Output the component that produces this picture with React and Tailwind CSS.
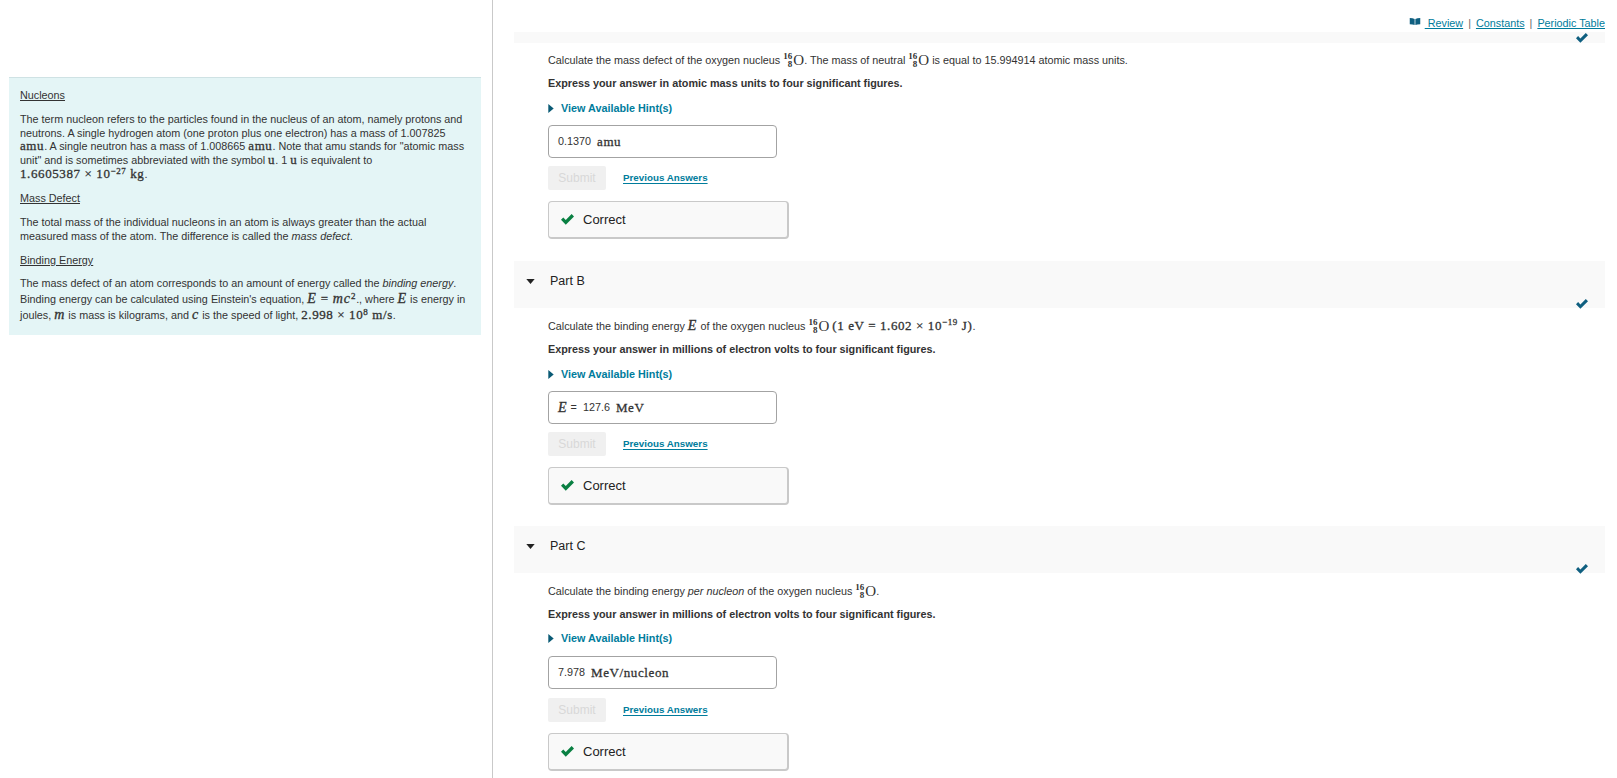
import React from "react";

const serif = "font-['Liberation_Serif','DejaVu_Serif',serif]";

function M({ children, className = "" }) {
  return <span className={`${serif} text-[13px] leading-[0] text-[#333] [-webkit-text-stroke:0.3px_#333] tracking-[0.6px] ${className}`}>{children}</span>;
}

function V({ children }) {
  return <span className={`${serif} italic text-[14px] leading-[0] text-[#333] [-webkit-text-stroke:0.35px_#333] tracking-[1px]`}>{children}</span>;
}

function Oxygen() {
  return (
    <span className={`${serif} inline-flex items-center align-middle text-[#333] relative -top-[1px]`}>
      <span className="inline-flex flex-col items-end text-[9px] font-bold leading-[8px] mr-[1px]">
        <span>16</span>
        <span>8</span>
      </span>
      <span className="text-[15px] leading-none">O</span>
    </span>
  );
}

function Check({ className = "" }) {
  return (
    <svg viewBox="0 0 12 10" className={className} fill="currentColor">
      <path d="M0 5.2 L2.1 3.1 L4.4 5.4 L9.8 0 L12 2.2 L4.4 9.8 Z" />
    </svg>
  );
}

function Caret() {
  return (
    <svg viewBox="0 0 10 6" className="w-[9px] h-[5px] text-[#222]" fill="currentColor">
      <path d="M0 0 H10 L5 6 Z" />
    </svg>
  );
}

function Hint() {
  return (
    <div className="flex items-center gap-[7px] h-[16px] text-[10.8px] leading-[16px] font-bold text-[#007c9c]">
      <svg viewBox="0 0 6 10" className="w-[6px] h-[9px] text-[#0a5a75]" fill="currentColor">
        <path d="M0 0 L6 5 L0 10 Z" />
      </svg>
      <span>View Available Hint(s)</span>
    </div>
  );
}

function Answer({ children, gapBefore, gapSubmit = "mt-[8px]" }) {
  return (
    <div>
      <div className={`w-[229px] h-[33px] ${gapBefore} flex items-center border border-[#a3a3a3] rounded-[4px] px-[9px] text-[10.8px] text-[#333] bg-white`}>
        {children}
      </div>
      <div className={`${gapSubmit} flex items-center gap-[17px]`}>
        <div className="w-[58px] h-[24px] bg-[#f0f0f0] rounded-[2px] flex items-center justify-center text-[12px] text-[#d8d8d8]">Submit</div>
        <span className="text-[9.8px] font-bold text-[#007c9c] underline underline-offset-2">Previous Answers</span>
      </div>
      <div className="mt-[11px] w-[241px] h-[38px] flex items-center border border-[#c9c9c9] border-r-2 border-b-2 rounded-[4px] bg-[#f9f9f9] pl-[12px] text-[13px] text-[#222]">
        <Check className="w-[13px] h-[11px] text-[#0a8043] mr-[9px]" />
        Correct
      </div>
    </div>
  );
}

function PartBar({ name }) {
  return (
    <div className="relative h-[47px] bg-[#f9f9f9] flex items-center pb-[6px] pl-[12px] text-[12.5px] text-[#222]">
      <Caret />
      <span className="ml-[15px]">{name}</span>
      <Check className="absolute right-[17px] -bottom-[1px] w-[12px] h-[10px] text-[#0f5f80]" />
    </div>
  );
}

function Question({ children, bold, top, boldTop = "mt-[5px]", hintTop }) {
  return (
    <div className="pl-[34px]">
      <div className={`h-[18px] flex items-center ${top}`}>
        <p className="text-[10.8px] leading-[18px] text-[#333] whitespace-nowrap">{children}</p>
      </div>
      <p className={`${boldTop} h-[18px] text-[10.8px] leading-[18px] font-bold text-[#333]`}>{bold}</p>
      <div className={hintTop}><Hint /></div>
    </div>
  );
}

function Heading({ children }) {
  return <p className="text-[10.8px] leading-[14px] text-[#333] underline underline-offset-1">{children}</p>;
}

export default function App() {
  return (
    <div className="flex h-[778px] overflow-hidden bg-white font-['Liberation_Sans',Arial,sans-serif]">
      <aside className="w-[493px] shrink-0 border-r border-[#c9c9c9] pt-[77px] pl-[9px] pr-[11px]">
        <div className="h-[258px] border-t border-[#cfe2e4] bg-[#e4f5f6] px-[11px] pt-[10px] text-[10.8px] leading-[13.5px] text-[#333]">
          <Heading>Nucleons</Heading>
          <p className="mt-[11px]">
            The term nucleon refers to the particles found in the nucleus of an atom, namely protons and neutrons. A single hydrogen atom (one proton plus one electron) has a mass of 1.007825{" "}
            <M>amu</M>. A single neutron has a mass of 1.008665 <M>amu</M>. Note that amu stands for "atomic mass unit" and is sometimes abbreviated with the symbol <M>u</M>. 1 <M>u</M> is equivalent to
          </p>
          <p className="leading-[14px]">
            <M>1.6605387 × 10<sup className="text-[9px]">−27</sup> kg</M>.
          </p>
          <div className="mt-[10px]"><Heading>Mass Defect</Heading></div>
          <p className="mt-[11px]">
            The total mass of the individual nucleons in an atom is always greater than the actual measured mass of the atom. The difference is called the <i>mass defect</i>.
          </p>
          <div className="mt-[10px]"><Heading>Binding Energy</Heading></div>
          <p className="mt-[8px] leading-[16px]">
            The mass defect of an atom corresponds to an amount of energy called the <i>binding energy</i>. Binding energy can be calculated using Einstein's equation, <V>E</V> <M className="mx-[1px]">=</M> <V>mc</V><M><sup className="text-[9px]">2</sup></M>., where <V>E</V> is energy in joules, <V>m</V> is mass is kilograms, and <V>c</V> is the speed of light, <M>2.998 × 10<sup className="text-[9px]">8</sup> m/s</M>.
          </p>
        </div>
      </aside>

      <main className="flex-1 min-w-0 pl-[21px] pr-[12px]">
        <div className="h-[32px] pt-[15px] flex justify-end items-start gap-[4px] text-[10.8px] leading-[16px] text-[#666]">
          <svg viewBox="0 0 12 8" className="w-[12px] h-[7px] mt-[3px] text-[#0f5f80]" fill="currentColor">
            <path d="M0 0 Q3.5 0 5.6 1 V8 Q3.5 7 0 7 Z M6.4 1 Q8.5 0 12 0 V7 Q8.5 7 6.4 8 Z" />
          </svg>
          <a className="text-[#007c9c] underline">&nbsp;Review</a>
          <span className="mx-[1px]">|</span>
          <a className="text-[#007c9c] underline">Constants</a>
          <span className="mx-[1px]">|</span>
          <a className="text-[#007c9c] underline">Periodic Table</a>
        </div>
        <div className="relative h-[11px] bg-[#f9f9f9]">
          <Check className="absolute right-[17px] top-[1px] w-[12px] h-[10px] text-[#0f5f80]" />
        </div>

        <Question top="mt-[8px]" boldTop="mt-[5px]" hintTop="mt-[8px]" bold="Express your answer in atomic mass units to four significant figures.">
          Calculate the mass defect of the oxygen nucleus <Oxygen />. The mass of neutral <Oxygen /> is equal to 15.994914 atomic mass units.
        </Question>
        <div className="pl-[34px] pb-[22px]">
          <Answer gapBefore="mt-[9px]">
            0.1370 <M className="ml-[6px]">amu</M>
          </Answer>
        </div>

        <PartBar name="Part B" />
        <Question top="mt-[9px]" hintTop="mt-[8px]" bold="Express your answer in millions of electron volts to four significant figures.">
          Calculate the binding energy <V>E</V> of the oxygen nucleus <Oxygen /> <M className="tracking-[0.4px]">(1 eV = 1.602 × 10<sup className="text-[9px]">−19</sup> J)</M>.
        </Question>
        <div className="pl-[34px] pb-[21px]">
          <Answer gapBefore="mt-[9px]">
            <V>E</V><span className="ml-[3px]">=</span><span className="ml-[6px]">127.6</span> <M className="ml-[6px]">MeV</M>
          </Answer>
        </div>

        <PartBar name="Part C" />
        <Question top="mt-[9px]" boldTop="mt-[5px]" hintTop="mt-[7px]" bold="Express your answer in millions of electron volts to four significant figures.">
          Calculate the binding energy <i>per nucleon</i> of the oxygen nucleus <Oxygen />.
        </Question>
        <div className="pl-[34px]">
          <Answer gapBefore="mt-[10px]" gapSubmit="mt-[9px]">
            7.978 <M className="ml-[6px]">MeV/nucleon</M>
          </Answer>
        </div>
      </main>
    </div>
  );
}
